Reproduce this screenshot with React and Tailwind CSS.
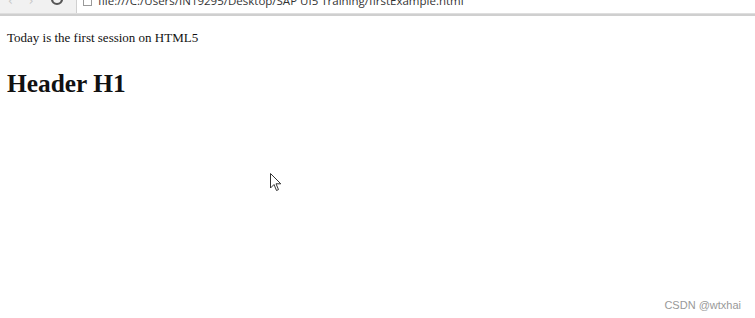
export default function App() {
  return (
    <div className="w-[755px] h-[318px] bg-white relative overflow-hidden">
      <div className="h-[13px] bg-[#f1f1f1] flex items-end overflow-hidden">
        <div className="w-[76px] h-full flex items-start gap-[16px] pl-[8px]">
          <span className="text-[#c8c8c8] text-[12px] leading-[6px] font-['DejaVu_Sans',sans-serif] -mt-[2px]">‹</span>
          <span className="text-[#c8c8c8] text-[12px] leading-[6px] font-['DejaVu_Sans',sans-serif] -mt-[2px]">›</span>
          <svg width="14" height="10" viewBox="0 0 14 10" className="-mt-[1px]">
            <path d="M2 0 A5 5 0 0 0 12 0" fill="none" stroke="#555" strokeWidth="2.2" />
          </svg>
        </div>
        <div className="flex-1 h-full bg-white border-l border-[#d0d0d0] flex items-start pl-[6px] overflow-hidden">
          <div className="w-[9px] h-[6px] border border-t-0 border-[#9a9a9a] mr-[6px]" />
          <span className="text-[11.5px] leading-[12px] -mt-[5px] text-[#333] font-['Open_Sans',sans-serif] whitespace-nowrap">
            file:///C:/Users/IN19295/Desktop/SAP UI5 Training/firstExample.html
          </span>
        </div>
      </div>
      <div className="h-[3px] bg-[#cfcfcf] border-t border-[#dedede]" />
      <div className="px-[7px] pt-[14px] font-['Liberation_Serif',serif] text-[#111]">
        <p className="text-[13px] leading-[16px]">Today is the first session on HTML5</p>
        <h1 className="text-[25.4px] leading-[30px] font-bold mt-[22px]">Header H1</h1>
      </div>
      <svg className="absolute left-[270px] top-[173px]" width="12" height="20" viewBox="0 0 12 20">
        <path d="M0.5 0.5 L0.5 15 L4 11.5 L6.5 17.5 L8.5 16.6 L6 10.8 L10.8 10.8 Z" fill="#fff" stroke="#333" strokeWidth="1" strokeLinejoin="miter" />
      </svg>
      <div className="absolute right-[14px] bottom-[5px] text-[11px] text-[#999] font-['Liberation_Sans',sans-serif]">
        CSDN @wtxhai
      </div>
    </div>
  );
}
